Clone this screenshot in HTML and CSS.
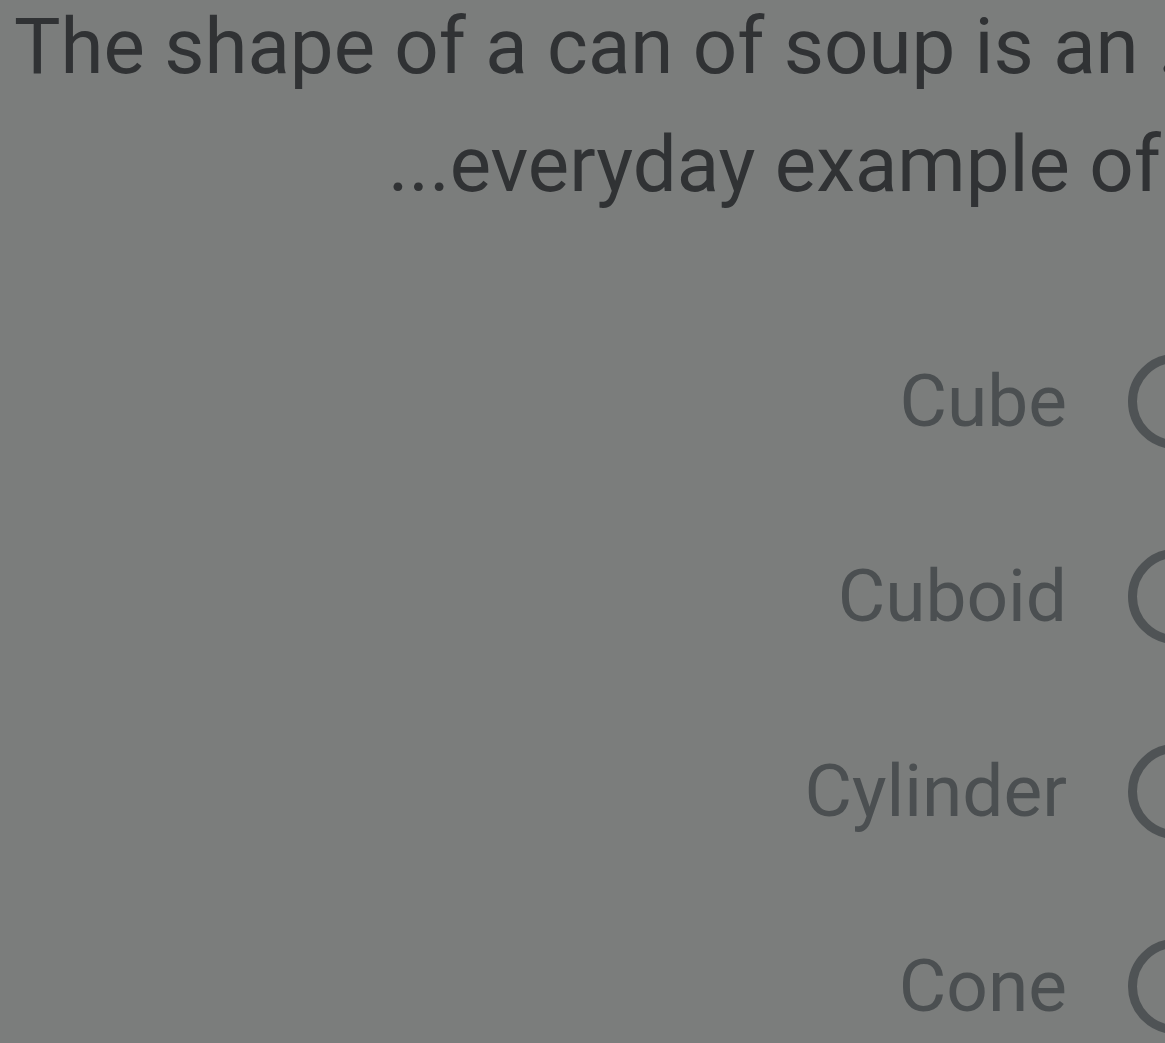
FILE: index.html
```html
<!DOCTYPE html>
<html lang="en">
<head>
  <meta charset="UTF-8" />
  <meta name="viewport" content="width=device-width, initial-scale=1.0"/>
  <title>Quiz Question</title>
  <link rel="stylesheet" href="styles.css">
</head>
<body>
  <div class="screen">
    <div class="question">
      <div class="line">The shape of a can of soup is an ...</div>
      <div class="line second">...everyday example of a</div>
    </div>

    <div class="options">
      <label class="option">
        <span class="option-text">Cube</span>
        <span class="radio"></span>
      </label>
      <label class="option">
        <span class="option-text">Cuboid</span>
        <span class="radio"></span>
      </label>
      <label class="option">
        <span class="option-text">Cylinder</span>
        <span class="radio"></span>
      </label>
      <label class="option">
        <span class="option-text">Cone</span>
        <span class="radio"></span>
      </label>
    </div>
  </div>
</body>
</html>
```

FILE: styles.css
```css
html, body {
  margin: 0;
  height: 100%;
  overflow: hidden;
}

body {
  font-family: Roboto, "Noto Sans", sans-serif;
  background: #7b7d7c;
}

.screen {
  width: 1165px;
  height: 1043px;
  overflow: hidden;
}

.question {
  color: #303234;
  font-size: 78px;
  line-height: 118px;
  white-space: nowrap;
  margin-top: -12px;
}

.line {
  padding-left: 14px;
}

.line.second {
  padding-left: 388px;
}

.options {
  width: 1223px;
  display: flex;
  flex-direction: column;
  gap: 99px;
  margin-top: 129px;
}

.option {
  display: flex;
  align-items: center;
  justify-content: flex-end;
  gap: 61px;
}

.option-text {
  color: #4b4f51;
  font-size: 73px;
  line-height: 96px;
}

.radio {
  width: 77px;
  height: 77px;
  border: 9px solid #4f5355;
  border-radius: 50%;
  flex-shrink: 0;
}
```
